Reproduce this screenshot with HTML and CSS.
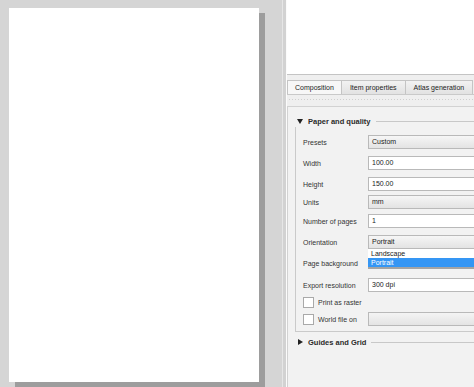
FILE: index.html
```html
<!DOCTYPE html>
<html lang="en">
<head>
  <meta charset="UTF-8" />
  <title>Print Composer</title>
  <link rel="stylesheet" href="styles.css">
</head>
<body>
  <div class="canvas">
    <div class="page"></div>
  </div>
  <div class="splitter"></div>

  <div class="side">
    <div class="top-panel"></div>

    <div class="tabs">
      <span class="tab active">Composition</span>
      <span class="tab">Item properties</span>
      <span class="tab">Atlas generation</span>
    </div>
    <div class="tab-rule"></div>

    <div class="pane">
      <div class="group-head">
        <span class="arrow down"></span>
        <span class="group-title">Paper and quality</span>
      </div>
      <div class="group-body">
        <div class="row">
          <span class="label">Presets</span>
          <span class="combo">Custom</span>
        </div>
        <div class="row">
          <span class="label">Width</span>
          <span class="input">100.00</span>
        </div>
        <div class="row">
          <span class="label">Height</span>
          <span class="input">150.00</span>
        </div>
        <div class="row tight">
          <span class="label">Units</span>
          <span class="combo">mm</span>
        </div>
        <div class="row near">
          <span class="label">Number of pages</span>
          <span class="input">1</span>
        </div>
        <div class="row">
          <span class="label">Orientation</span>
          <span class="combo open">Portrait
            <span class="dropdown">
              <span class="option">Landscape</span>
              <span class="option selected">Portrait</span>
            </span>
          </span>
        </div>
        <div class="row">
          <span class="label">Page background</span>
        </div>
        <div class="row wide">
          <span class="label">Export resolution</span>
          <span class="input">300 dpi</span>
        </div>
        <div class="row check-row">
          <span class="checkbox"></span>
          <span class="check-label">Print as raster</span>
        </div>
        <div class="row world">
          <span class="checkbox"></span>
          <span class="check-label world-label">World file on</span>
          <span class="button"></span>
        </div>
      </div>

      <div class="group-head closed-head">
        <span class="arrow right"></span>
        <span class="group-title">Guides and Grid</span>
      </div>
    </div>
  </div>
</body>
</html>
```

FILE: styles.css
```css
body {
  margin: 0;
  width: 474px;
  height: 387px;
  display: flex;
  overflow: hidden;
  font-family: "Liberation Sans", Arial, sans-serif;
  font-size: 7px;
  color: #333;
}

.canvas {
  width: 282px;
  flex: none;
  background: #d5d5d5;
  padding: 8px 0 0 9px;
  box-sizing: border-box;
}

.page {
  width: 250px;
  height: 374px;
  background: white;
  box-shadow: 6px 5px 0 #9d9d9d;
}

.splitter {
  width: 3px;
  flex: none;
  background: #d2d2d2;
  border-left: 1px solid #e6e6e6;
  border-right: 1px solid #fbfbfb;
}

.side {
  flex: 1;
  min-width: 0;
  overflow: hidden;
  background: #efefef;
}

.top-panel {
  height: 74px;
  background: white;
  border-bottom: 1px solid #c4c4c4;
}

.tabs {
  display: flex;
  margin-top: 5px;
  height: 14px;
  border-bottom: 1px solid #c9c9c9;
}

.tab {
  padding: 0 8px;
  line-height: 13px;
  border: 1px solid #c4c4c4;
  border-left: none;
  border-bottom: none;
  background: linear-gradient(#f2f2f2, #e2e2e2);
  color: #222;
}

.tab.active {
  background: #f7f7f7;
  border-left: 1px solid #c4c4c4;
  padding: 0 7px;
}

.tab-rule {
  height: 3px;
  margin: 3px 0 0 1px;
  background-image: radial-gradient(circle, #cfcfcf 0.6px, transparent 0.8px);
  background-size: 3px 3px;
}

.pane {
  margin-top: 5px;
  height: 290px;
  background: #f2f2f2;
  border: 1px solid #d2d2d2;
  border-right: none;
  padding-left: 7px;
}

.group-head {
  display: flex;
  align-items: center;
  height: 12px;
  margin-top: 8px;
  padding-left: 2px;
}

.group-head::after {
  content: "";
  flex: 1;
  margin-left: 5px;
  border-top: 1px solid #c8c8c8;
}

.group-title {
  font-weight: bold;
  font-size: 7.5px;
  color: #2a2a2a;
  margin-left: 5px;
}

.arrow {
  width: 0;
  height: 0;
}

.arrow.down {
  border-left: 3.5px solid transparent;
  border-right: 3.5px solid transparent;
  border-top: 5px solid #222;
}

.arrow.right {
  margin-left: 1px;
  border-top: 3.5px solid transparent;
  border-bottom: 3.5px solid transparent;
  border-left: 5px solid #222;
}

.group-body {
  border-left: 1px solid #cacaca;
  border-bottom: 1px solid #cacaca;
  padding: 1px 0 5px 7px;
}

.row {
  display: flex;
  align-items: center;
  height: 14px;
  margin-top: 7px;
  white-space: nowrap;
}

.row.tight {
  margin-top: 4px;
}

.row.near {
  margin-top: 5px;
}

.row.wide {
  margin-top: 8px;
}

.row.check-row {
  height: 10px;
  margin-top: 5px;
}

.row.world {
  margin-top: 5px;
}

.label {
  width: 65px;
  flex: none;
}

.input,
.combo,
.button {
  position: relative;
  width: 130px;
  height: 14px;
  flex: none;
  box-sizing: border-box;
  line-height: 12px;
  padding-left: 3px;
  border: 1px solid #b9b9b9;
  color: #222;
}

.input {
  background: white;
}

.combo {
  background: linear-gradient(#f6f6f6, #e3e3e3);
}

.button {
  background: linear-gradient(#f4f4f4, #e4e4e4);
}

.dropdown {
  position: absolute;
  left: -1px;
  top: 13px;
  width: 130px;
  z-index: 2;
  display: flex;
  flex-direction: column;
  background: white;
  border-bottom: 2px solid #a4a4a4;
}

.option {
  height: 9px;
  line-height: 9px;
  padding-left: 3px;
  color: #222;
}

.option.selected {
  background: #3596f4;
  color: white;
}

.checkbox {
  width: 9px;
  height: 9px;
  flex: none;
  background: white;
  border: 1px solid #a9a9a9;
}

.check-label {
  margin-left: 4px;
}

.world-label {
  width: 50px;
  flex: none;
}

.closed-head {
  margin-top: 4px;
}
```
